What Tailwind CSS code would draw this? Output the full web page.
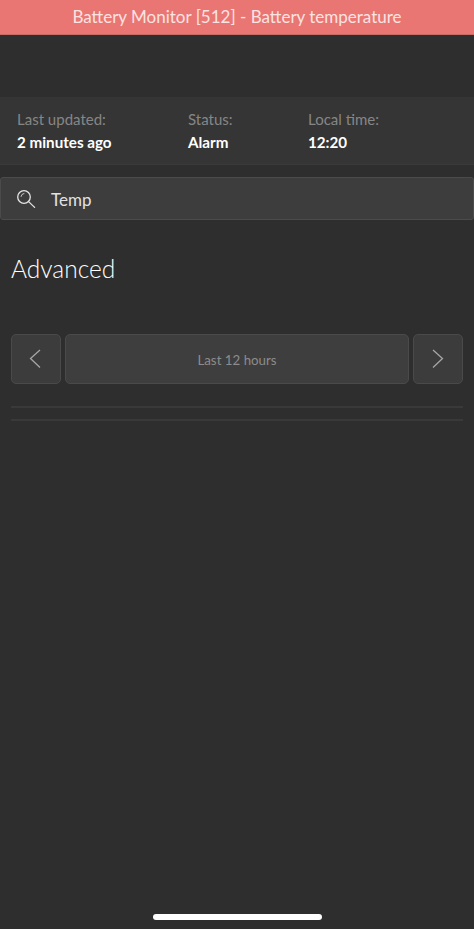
<!DOCTYPE html>
<html lang="en">
<head>
  <meta charset="UTF-8">
  <meta name="viewport" content="width=device-width, initial-scale=1.0">
  <title>Battery temperature</title>
  <script src="https://cdn.jsdelivr.net/npm/@tailwindcss/browser@4"></script>
</head>
<body class="bg-[#2e2e2e] font-['Lato',sans-serif] h-[929px] overflow-hidden relative">
  <div class="h-[35px] bg-[#e97672] border-b border-[#c96a67] flex items-center justify-center text-[#fbe3e2] text-[17px]">
    Battery Monitor [512] - Battery temperature
  </div>

  <div class="mt-[62px] h-[68px] bg-[#353535] border-b border-[#3a3a3a] flex pl-[17px] pt-[12px]">
    <div class="w-[171px]">
      <div class="text-[15px] leading-[20px] text-[#868686]">Last updated:</div>
      <div class="text-[15.2px] leading-[20px] mt-[3px] font-bold text-white">2 minutes ago</div>
    </div>
    <div class="w-[120px]">
      <div class="text-[15px] leading-[20px] text-[#868686]">Status:</div>
      <div class="text-[15.2px] leading-[20px] mt-[3px] font-bold text-white">Alarm</div>
    </div>
    <div>
      <div class="text-[15px] leading-[20px] text-[#868686]">Local time:</div>
      <div class="text-[15.2px] leading-[20px] mt-[3px] font-bold text-white">12:20</div>
    </div>
  </div>

  <div class="mt-[12px] h-[43px] bg-[#3d3d3d] border border-[#4b4b4b] rounded-[3px] flex items-center pl-[15px]">
    <svg width="20" height="20" viewBox="0 0 20 20" fill="none" stroke="#e4e4e4" stroke-width="1.3" stroke-linecap="round">
      <circle cx="8" cy="8" r="6.3"/>
      <path d="M12.6 12.6 L18.6 18.4"/>
      <path d="M5 7.5 A3.5 3.5 0 0 1 8 4.4" stroke-width="0.8"/>
    </svg>
    <span class="ml-[15px] pt-[3px] text-[17px] text-[#e2e2e2]">Temp</span>
  </div>

  <h1 class="mt-[34px] ml-[11px] text-[24.5px] leading-[30px] text-white font-light">Advanced</h1>

  <div class="mt-[50px] mx-[11px] flex gap-[4px] h-[50px]">
    <button class="w-[50px] shrink-0 bg-[#3c3c3c] border border-[#4a4a4a] rounded-[5px] flex items-center justify-center">
      <svg class="mr-[2px]" width="12" height="20" viewBox="0 0 12 20" fill="none" stroke="#a6a6a6" stroke-width="1.3"><path d="M11 1 L1.5 9.5 L11 18.5"/></svg>
    </button>
    <button class="flex-1 bg-[#3e3e3e] border border-[#4a4a4a] rounded-[5px] pt-[3px] text-[13.3px] text-[#8c8c8c]">Last 12 hours</button>
    <button class="w-[50px] shrink-0 bg-[#3c3c3c] border border-[#4a4a4a] rounded-[5px] flex items-center justify-center">
      <svg width="12" height="20" viewBox="0 0 12 20" fill="none" stroke="#a6a6a6" stroke-width="1.3"><path d="M1 1 L10.5 9.5 L1 18.5"/></svg>
    </button>
  </div>

  <div class="mt-[22px] mx-[11px] h-[2px] bg-[#393939]"></div>
  <div class="mt-[11px] mx-[11px] h-[2px] bg-[#393939]"></div>

  <div class="absolute left-[153px] top-[914px] w-[169px] h-[6px] rounded-full bg-white"></div>
</body>
</html>
